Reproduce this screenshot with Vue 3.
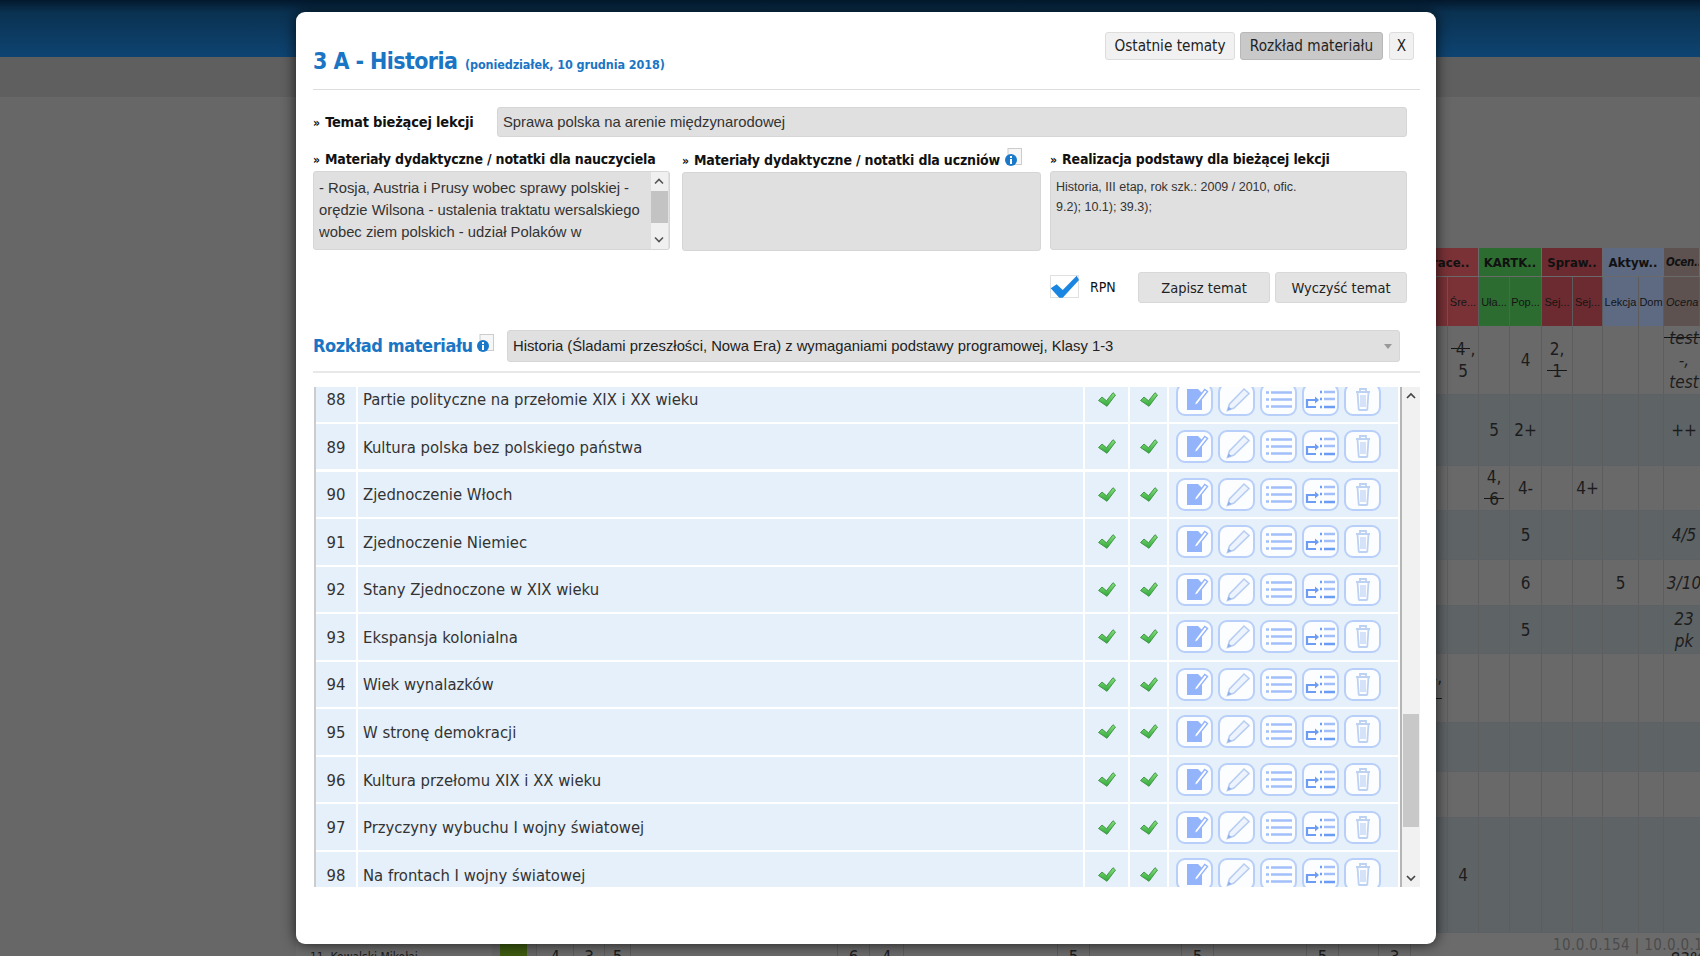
<script setup>
const lessons = [
  [88, 'Partie polityczne na przełomie XIX i XX wieku'],
  [89, 'Kultura polska bez polskiego państwa'],
  [90, 'Zjednoczenie Włoch'],
  [91, 'Zjednoczenie Niemiec'],
  [92, 'Stany Zjednoczone w XIX wieku'],
  [93, 'Ekspansja kolonialna'],
  [94, 'Wiek wynalazków'],
  [95, 'W stronę demokracji'],
  [96, 'Kultura przełomu XIX i XX wieku'],
  [97, 'Przyczyny wybuchu I wojny światowej'],
  [98, 'Na frontach I wojny światowej'],
]
const groups = [
  { t: 'Prace..', w: 64, c: 'red1' },
  { t: 'KARTK..', w: 63, c: 'green' },
  { t: 'Spraw..', w: 61, c: 'red2' },
  { t: 'Aktyw..', w: 61, c: 'slate' },
  { t: 'Ocen..', w: 36, c: 'brown', i: true },
]
const subs = [
  { t: '...', w: 49, c: 'red1' },
  { t: 'Śre...', w: 31, c: 'red1' },
  { t: 'Uła...', w: 31, c: 'green' },
  { t: 'Pop...', w: 32, c: 'green' },
  { t: 'Sej...', w: 31, c: 'red2' },
  { t: 'Sej...', w: 30, c: 'red2' },
  { t: 'Lekcja', w: 36, c: 'slate' },
  { t: 'Dom', w: 25, c: 'slate' },
  { t: 'Ocena', w: 36, c: 'brown', i: true },
]
const widths = [31, 31, 32, 31, 30, 36, 25, 36]
// a cell value: plain string, or lines where { s: text } is a struck-out mark
const rows = [
  { h: 69, c: [[{ s: '4' }, ',', null, '5'], '', '4', ['2,', null, { s: '1' }], '', '', '', [{ s: 'test' }, null, '-,', null, 'test']], alt: false },
  { h: 71, c: ['', '5', '2+', '', '', '', '', '++'], alt: true },
  { h: 45, c: ['', ['4,', null, { s: '6' }], '4-', '', '4+', '', '', ''], alt: false },
  { h: 49, c: ['', '', '5', '', '', '', '', '4/5'], alt: true },
  { h: 46, c: ['', '', '6', '', '', '5', '', '3/10'], alt: false },
  { h: 48, c: ['', '', '5', '', '', '', '', ['23', null, 'pk']], alt: true },
  { h: 69, c: ['', '', '', '', '', '', '', ''], alt: false, extra: true },
  { h: 49, c: ['', '', '', '', '', '', '', ''], alt: true },
  { h: 46, c: ['', '', '', '', '', '', '', ''], alt: false },
  { h: 115, c: ['4', '', '', '', '', '', '', ''], alt: true },
]
const bottom = [
  [45, ''], [37, '4'], [31, '3'], [26, '5'], [207, ''], [32, '6'], [34, '4'], [154, ''],
  [32, '5'], [92, ''], [32, '5'], [93, ''], [32, '5'], [40, ''], [32, '3'],
]
</script>

<template>
  <div class="page">
    <svg class="defs" width="0" height="0">
      <defs>
        <linearGradient id="ck" x1="0" y1="0" x2="0" y2="1">
          <stop offset="0" stop-color="#86e07a" />
          <stop offset="1" stop-color="#2fa83a" />
        </linearGradient>
      </defs>
    </svg>
    <div class="bar-top"></div>
    <div class="bar-sub"></div>
    <div class="board">
      <div class="bhead">
        <div class="fill"></div>
        <div v-for="g in groups" :key="g.t" class="gcell" :class="[g.c, { it: g.i }]" :style="{ width: g.w + 'px' }">{{ g.t }}</div>
      </div>
      <div class="bsub">
        <div class="fill"></div>
        <div v-for="(s, i) in subs" :key="i" class="scell" :class="[s.c, { it: s.i }]" :style="{ width: s.w + 'px' }">{{ s.t }}</div>
      </div>
      <div v-for="(r, ri) in rows" :key="ri" class="brow" :class="{ alt: r.alt }" :style="{ height: r.h + 'px' }">
        <div class="fill cell c0"><span v-if="r.extra">4,<br><s class="mark">3</s></span></div>
        <div v-for="(w, ci) in widths" :key="ci" class="cell" :class="{ last: ci === 7 }" :style="{ width: w + 'px' }">
          <span v-if="Array.isArray(r.c[ci])">
            <template v-for="(p, pi) in r.c[ci]" :key="pi">
              <br v-if="p === null"><s v-else-if="p.s" class="mark">{{ p.s }}</s><template v-else>{{ p }}</template>
            </template>
          </span>
          <span v-else>{{ r.c[ci] }}</span>
        </div>
      </div>
      <div class="blast">
        <div class="name">11. Kowalski Mikołaj</div>
        <div v-for="(b, i) in bottom" :key="i" class="lcell" :class="{ lgreen: i === 0 }" :style="{ width: b[0] + 'px' }">{{ b[1] }}</div>
        <div class="lcell pct">83%</div>
      </div>
    </div>
    <div class="ip">10.0.0.154 | 10.0.0.114</div>

    <section class="modal">
      <header class="mhead">
        <h1 class="mtitle">3 A - Historia <small>(poniedziałek, 10 grudnia 2018)</small></h1>
        <div class="mbtns">
          <button class="tbtn first">Ostatnie tematy</button>
          <button class="tbtn active">Rozkład materiału</button>
          <button class="tbtn close">X</button>
        </div>
      </header>

      <div class="temat">
        <label class="lbl temat-lbl"><i>»</i> Temat bieżącej lekcji</label>
        <div class="field temat-in">Sprawa polska na arenie międzynarodowej</div>
      </div>

      <div class="notes">
        <div class="ncol n1">
          <div class="lbl"><i>»</i> Materiały dydaktyczne / notatki dla nauczyciela</div>
          <div class="field area">
            <div class="area-text">- Rosja, Austria i Prusy wobec sprawy polskiej - orędzie Wilsona - ustalenia traktatu wersalskiego wobec ziem polskich - udział Polaków w</div>
            <div class="mini-sb">
              <svg width="16" height="14" viewBox="0 0 16 14"><path d="M4 9l4-4 4 4" fill="none" stroke="#555" stroke-width="1.6"/></svg>
              <div class="mini-track"><div class="mini-thumb"></div></div>
              <svg width="16" height="14" viewBox="0 0 16 14"><path d="M4 5l4 4 4-4" fill="none" stroke="#555" stroke-width="1.6"/></svg>
            </div>
          </div>
        </div>
        <div class="ncol n2">
          <div class="lbl lbl2"><i>»</i> Materiały dydaktyczne / notatki dla uczniów
            <svg class="info" width="18" height="18" viewBox="0 0 18 18"><rect x="3" y=".5" width="13.500" height="16" fill="#f6f6f6" stroke="#ccc"/><circle cx="6" cy="12" r="6" fill="#1a78c8"/><rect x="5" y="11" width="2" height="5" fill="#fff"/><rect x="5" y="8" width="2" height="2" fill="#fff"/></svg>
          </div>
          <div class="field area a2"></div>
        </div>
        <div class="ncol n3">
          <div class="lbl"><i>»</i> Realizacja podstawy dla bieżącej lekcji</div>
          <div class="field area a3">Historia, III etap, rok szk.: 2009 / 2010, ofic.<br>9.2); 10.1); 39.3);</div>
        </div>
      </div>

      <div class="actions">
        <span class="rpn-box">
          <svg width="31" height="25" viewBox="0 0 31 25"><path d="M.7 13.300L6.700 9.300 12.700 15 26.700.7 29 5 12.700 22.700H9.300z" fill="#1b86e2"/></svg>
        </span>
        <span class="rpn">RPN</span>
        <button class="gbtn">Zapisz temat</button>
        <button class="gbtn">Wyczyść temat</button>
      </div>

      <div class="plan">
        <h2 class="ptitle">Rozkład materiału</h2>
        <svg class="info pinfo" width="18" height="18" viewBox="0 0 18 18"><rect x="3" y=".5" width="13.500" height="16" fill="#f6f6f6" stroke="#ccc"/><circle cx="6" cy="12" r="6" fill="#1a78c8"/><rect x="5" y="11" width="2" height="5" fill="#fff"/><rect x="5" y="8" width="2" height="2" fill="#fff"/></svg>
        <div class="field select">
          <span>Historia (Śladami przeszłości, Nowa Era) z wymaganiami podstawy programowej, Klasy 1-3</span>
          <i class="caret"></i>
        </div>
      </div>

      <div class="tablewrap">
        <div class="viewport">
          <div class="list">
            <div v-for="l in lessons" :key="l[0]" class="lrow">
              <div class="lc num">{{ l[0] }}</div>
              <div class="lc ttl">{{ l[1] }}</div>
              <div v-for="c in 2" :key="c" class="lc chk">
                <svg width="18" height="15" viewBox="0 0 18 15"><path d="M.5 8.500L4 5l4.500 3.800L15 .7 17.500 3 9 14.300z" fill="url(#ck)" stroke="#3c8f42" stroke-width=".9"/></svg>
              </div>
              <div class="lc acts">
                <span class="ab"><svg width="33" height="29" viewBox="0 0 33 29">
                  <path d="M9 4h11l4 4v17H9z" fill="#93b4fb"/>
                  <path d="M29.500 6.500l-9.500 12-3.500 2.500.7-4 9.500-12.500z" fill="#fff" stroke="#93b4fb" stroke-width="1.300"/>
                </svg></span>
                <span class="ab"><svg width="33" height="29" viewBox="0 0 33 29">
                  <path d="M24 4l5 4.500L14 23l-6.500 2.500L9.500 19z" fill="#eef4fe" stroke="#b7cdf2" stroke-width="1.600"/>
                  <path d="M7.500 25.500l1-4 3 2.500z" fill="#8eaee8"/>
                </svg></span>
                <span class="ab"><svg width="33" height="29" viewBox="0 0 33 29">
                  <g stroke="#a3bffa" stroke-width="2.400"><path d="M9 7.500h21M9 14.500h21M9 21.500h21"/><path d="M4 7.500h3M4 14.500h3M4 21.500h3"/></g>
                </svg></span>
                <span class="ab"><svg width="33" height="29" viewBox="0 0 33 29">
                  <path d="M20 7h11M20 14h11" stroke="#a3bffa" stroke-width="2.400"/>
                  <path d="M20 22h11" stroke="#6d9cf5" stroke-width="2.400"/>
                  <path d="M16 7h2M16 14h2M16 22h2" stroke="#6d9cf5" stroke-width="2.400"/>
                  <path d="M12 15H3v7h9" fill="none" stroke="#6d9cf5" stroke-width="2.200"/>
                  <path d="M11 11.500v7l4-3.500z" fill="#6d9cf5"/>
                </svg></span>
                <span class="ab"><svg width="33" height="29" viewBox="0 0 33 29">
                  <path d="M10 7h14M14 7V4h6v3M11.500 7l1.200 17.500c0 .5.300.5.800.5h7c.5 0 .8 0 .8-.5L22.500 7" fill="none" stroke="#bdd1f3" stroke-width="1.800"/>
                  <path d="M15 10v12M17 10v12M19 10v12" stroke="#bdd1f3" stroke-width="1.200"/>
                </svg></span>
              </div>
            </div>
          </div>
        </div>
        <div class="vscroll">
          <svg width="18" height="17" viewBox="0 0 18 17"><path d="M5 11l4-4 4 4" fill="none" stroke="#444" stroke-width="1.700"/></svg>
          <div class="vtrack"><div class="vthumb"></div></div>
          <svg width="18" height="17" viewBox="0 0 18 17"><path d="M5 6l4 4 4-4" fill="none" stroke="#444" stroke-width="1.700"/></svg>
        </div>
      </div>
    </section>
  </div>
</template>

<style scoped>
* { box-sizing: border-box; }
.page {
  width: 1700px; height: 956px; position: relative; overflow: hidden;
  background: #676767;
  font-family: "DejaVu Sans", sans-serif;
  font-stretch: condensed;
}
.defs { position: absolute; }
.bar-top { height: 57px; background: linear-gradient(#03182c 0, #0a3150 12px, #0e4472 100%); }
.bar-sub { height: 40px; background: #5f5f5f; }
.board { margin: 151px 0 0 296px; font-size: 17px; color: #1c1c1c; }
.bhead, .bsub, .brow { display: flex; }
.fill { flex: 1; }
.bhead { height: 28px; }
.gcell { font-size: 13px; font-weight: 700; display: flex; align-items: center; justify-content: center; border-right: 1px solid #6a6a6a; color: #111; white-space: nowrap; overflow: hidden; }
.bsub { height: 50px; border-top: 1px solid #6a6a6a; }
.scell { font-size: 11px; display: flex; align-items: center; justify-content: center; border-right: 1px solid #5c5c5c; white-space: nowrap; overflow: hidden; font-family: "Liberation Sans", sans-serif; color: #151515; }
.it { font-style: italic; }
.gcell.it { font-size: 11.500px; letter-spacing: -.3px; }
.gcell.it, .scell.it { justify-content: flex-start; padding-left: 2px; }
.red1 { background: #7a3237; }
.red2 { background: #6c2b30; }
.green { background: #2c6c30; }
.slate { background: #5e6a82; }
.brown { background: #5e5251; }
.brow { background: #696969; border-bottom: 1px solid #5d6166; }
.brow.alt { background: #5e6366; }
.cell { display: flex; align-items: center; justify-content: center; text-align: center; border-right: 1px solid #5d5d5d; line-height: 22px; white-space: nowrap; flex: none; }
.cell.fill { flex: 1; }
.c0 { justify-content: flex-end; padding-right: 5px; text-align: right; }
.cell.last { font-style: italic; border-right: 0; padding-left: 4px; }
.mark { text-decoration: none; padding: 0 5px; background: linear-gradient(#151515, #151515) center / 100% 1.300px no-repeat; }
.blast { display: flex; height: 23px; background: #6b6b6b; overflow: hidden; }
.name { width: 196px; flex: none; padding: 17px 0 0 14px; font-size: 12px; white-space: nowrap; }
.lcell { padding-top: 14px; text-align: center; line-height: 20px; border-right: 1px solid #5d5d5d; flex: none; }
.lgreen { background: linear-gradient(90deg, #676767 8px, #3d5a10 8px, #3d5a10 35px, #676767 35px); }
.pct { padding-top: 16px; font-style: italic; margin-left: 259px; border: 0; }
.ip { position: absolute; left: 1553px; top: 936px; font-size: 15px; color: #4c4c4c; white-space: nowrap; letter-spacing: .4px; }

.modal {
  position: absolute; left: 296px; top: 12px; width: 1140px; height: 932px;
  background: #fff; border-radius: 9px; box-shadow: 0 0 14px rgba(0, 0, 0, .75);
  padding: 0 16px 0 17px; color: #222;
}
.mhead { height: 78px; display: flex; justify-content: space-between; border-bottom: 1.500px solid #ddd; }
.mtitle { margin: 35px 0 0; font-size: 23px; font-weight: 700; color: #1a75c4; line-height: 28px; letter-spacing: -.6px; }
.mtitle small { font-size: 12.500px; margin-left: 1px; letter-spacing: -.1px; }
.mbtns { display: flex; gap: 5px; padding: 20px 6px 0 0; align-items: flex-start; }
button { font-family: inherit; font-stretch: condensed; color: #222; cursor: pointer; }
.tbtn { height: 28px; padding: 0; font-size: 15.200px; background: #f1f1f1; border: 1px solid #ddd; border-radius: 3px; white-space: nowrap; }
.tbtn.first { width: 130px; }
.tbtn.active { background: #c9c9c9; border-color: #b8b8b8; width: 143px; }
.tbtn.close { width: 25px; margin-left: 1px; }
.lbl { font-size: 14px; font-weight: 700; color: #111; white-space: nowrap; line-height: 18px; letter-spacing: -.18px; }
.lbl i { font-style: normal; font-size: 12px; margin-right: 1px; }
.field { background: #e0e0e0; border: 1px solid #d6d6d6; border-radius: 3px; font-family: "Liberation Sans", sans-serif; color: #333; }
.temat { display: flex; align-items: center; margin-top: 17px; height: 30px; }
.temat-lbl { width: 184px; flex: none; font-size: 14.500px; }
.temat-in { width: 910px; height: 30px; font-size: 14.800px; padding-left: 5px; line-height: 28px; }
.notes { display: flex; margin-top: 24px; }
.ncol { width: 357px; flex: none; }
.n2 { width: 359px; margin-left: 12px; padding-top: 1px; }
.n3 { margin-left: 9px; }
.ncol .lbl { height: 17px; line-height: 16px; margin-top: -10px; margin-bottom: 3px; }
.area { height: 79px; }
.n1 .area { display: flex; overflow: hidden; padding: 5px 0 0 5px; font-size: 14.800px; line-height: 22px; position: relative; }
.area-text { width: 330px; flex: none; height: 66px; overflow: hidden; }
.mini-sb { position: absolute; right: 1px; top: 0; bottom: 0; width: 17px; background: #f0f0f0; display: flex; flex-direction: column; }
.mini-sb svg { flex: none; height: 19px; }
.mini-track { flex: 1; }
.mini-thumb { height: 32px; background: #c3c3c3; }
.lbl2 { position: relative; }
.info { position: absolute; }
.lbl2 .info { left: 323px; top: -4px; }
.a3 { font-size: 12.500px; line-height: 20px; padding: 5px 5px; }
.actions { display: flex; align-items: flex-start; margin-top: 21px; padding-left: 737px; height: 33px; }
.rpn-box { width: 29px; height: 23px; border: 1px solid #e0e0e0; margin-top: 3px; background: #fff; position: relative; flex: none; }
.rpn-box svg { position: absolute; left: -1px; top: -1px; }
.rpn { font-size: 14px; margin: 7px 0 0 11px; width: 48px; color: #111; }
.gbtn { width: 132px; height: 31px; background: #e3e3e3; border: 1px solid #d8d8d8; border-radius: 3px; font-size: 14.500px; flex: none; }
.gbtn + .gbtn { margin-left: 5px; }
.plan { display: flex; align-items: flex-start; height: 43px; margin-top: 25px; border-bottom: 2px solid #e8e8e8; position: relative; }
.ptitle { margin: 0; font-size: 18px; font-weight: 700; color: #1a75c4; width: 194px; white-space: nowrap; letter-spacing: -.4px; line-height: 32px; flex: none; }
.pinfo { left: 164px; top: 4px; }
.select { width: 893px; height: 32px; flex: none; font-size: 14.800px; padding: 0 5px; line-height: 30px; position: relative; color: #222; }
.caret { position: absolute; right: 7px; top: 13px; border: 4px solid transparent; border-top: 5px solid #999; border-bottom: 0; }
.tablewrap { display: flex; height: 500px; margin-top: 14px; }
.viewport { width: 1086px; height: 500px; overflow: hidden; border-left: 2px solid #ccc; margin-left: 1px; flex: none; }
.list { margin-top: -10.600px; display: flex; flex-direction: column; gap: 2.060px; }
.lrow { display: grid; grid-template-columns: 40px 725px 43px 37px 229px; gap: 2px; height: 45.500px; flex: none; }
.lc { background: #e5f0fa; display: flex; align-items: center; }
.num { justify-content: center; font-size: 16.500px; color: #333; padding-top: 1px; }
.ttl { padding: 1px 0 0 5px; font-size: 16.500px; color: #333; white-space: nowrap; }
.chk { justify-content: center; }
.acts { padding-left: 7px; gap: 5px; }
.ab { width: 37px; height: 33px; border: 2px solid #b8cffa; border-radius: 9px; background: #fbfdff; flex: none; display: block; overflow: hidden; }
.ab svg { display: block; }
.vscroll { width: 20px; height: 500px; border-left: 2px solid #b5b5b5; background: #f1f1f1; display: flex; flex-direction: column; flex: none; }
.vscroll svg { flex: none; }
.vtrack { flex: 1; position: relative; }
.vthumb { position: absolute; left: 1px; right: 1px; top: 310px; height: 113px; background: #c8c8c8; }
</style>
